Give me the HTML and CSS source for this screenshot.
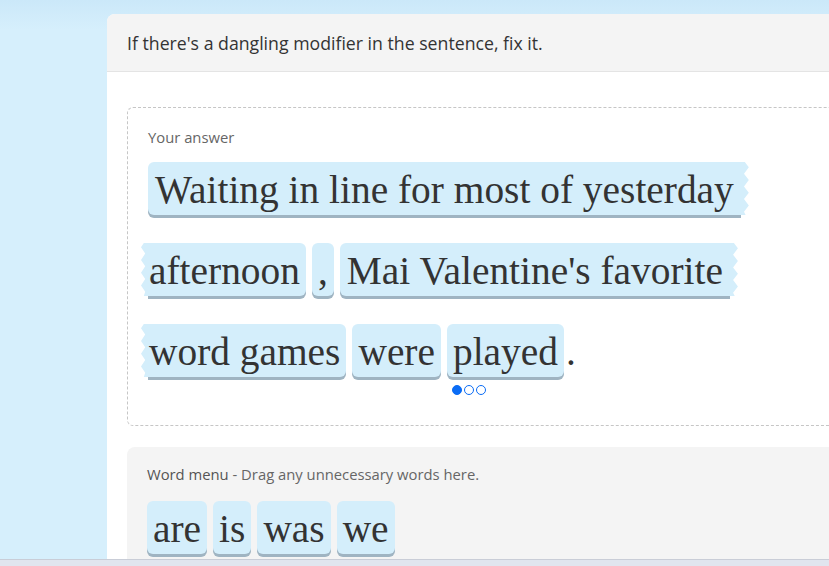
FILE: index.html
```html
<!DOCTYPE html>
<html lang="en">
<head>
<meta charset="utf-8">
<title>Dangling modifier</title>
<link rel="stylesheet" href="styles.css">
</head>
<body>
<div class="page">
  <div class="card">
    <div class="card-header">If there's a dangling modifier in the sentence, fix it.</div>
    <div class="card-body">
      <div class="answer">
        <div class="label">Your answer</div>
        <div class="lines">
          <div class="line">
            <span class="chip torn-right">Waiting in line for most of yesterday</span>
          </div>
          <div class="line">
            <span class="chip torn-left">afternoon</span>
            <span class="chip">,</span>
            <span class="chip torn-right">Mai Valentine's favorite</span>
          </div>
          <div class="line">
            <span class="chip torn-left">word games</span>
            <span class="chip">were</span>
            <span class="chip with-dots">played<span class="dots"><i class="dot on"></i><i class="dot"></i><i class="dot"></i></span></span>
            <span class="plain">.</span>
          </div>
        </div>
      </div>
      <div class="menu">
        <div class="label"><span class="label-strong">Word menu</span> - Drag any unnecessary words here.</div>
        <div class="line menu-line">
          <span class="chip">are</span>
          <span class="chip">is</span>
          <span class="chip">was</span>
          <span class="chip">we</span>
        </div>
      </div>
    </div>
  </div>
</div>
<div class="bottom-bar"></div>
</body>
</html>
```

FILE: styles.css
```css
* { box-sizing: border-box; }

html, body {
  margin: 0;
  height: 566px;
  overflow: hidden;
}

body {
  background: linear-gradient(#cbe8f9 0, #d6effc 30px, #d6effc 100%);
  font-family: "Open Sans", Lato, sans-serif;
  color: #333;
}

.page {
  padding: 14px 0 0 107px;
}

.card {
  width: 760px;
  background: #fff;
  border-radius: 8px 0 0 0;
  height: 560px;
}

.card-header {
  height: 58px;
  background: #f4f4f4;
  border-bottom: 1px solid #e4e4e4;
  border-radius: 8px 0 0 0;
  display: flex;
  align-items: center;
  padding-left: 20px;
  font-size: 17.7px;
  color: #333;
}

.card-body {
  padding: 35px 0 0 20px;
}

.answer {
  height: 319px;
  border: 1px dashed #c6c6c6;
  border-right: none;
  border-radius: 6px 0 0 6px;
  padding: 20px 0 0 20px;
}

.label {
  font-size: 14.8px;
  line-height: 18px;
  color: #666;
}

.label-strong {
  color: #555;
}

.lines {
  margin-top: 16px;
  display: flex;
  flex-direction: column;
  gap: 28px;
}

.line {
  display: flex;
  align-items: flex-start;
  gap: 6px;
}

.chip {
  position: relative;
  display: inline-block;
  height: 53px;
  line-height: 57px;
  padding: 0 6px;
  background: #d4eefb;
  border-radius: 6px;
  box-shadow: 0 3px 0 #9fb4c2;
  font-family: "Liberation Serif", "Times New Roman", serif;
  font-size: 39.4px;
  color: #333;
  white-space: nowrap;
}

.chip.torn-right {
  padding-left: 7px;
  padding-right: 7px;
  border-top-right-radius: 0;
  border-bottom-right-radius: 0;
}

.chip.torn-right::after {
  content: "";
  position: absolute;
  top: 0;
  right: -8px;
  width: 8px;
  height: 53px;
  background: #d4eefb;
  clip-path: polygon(0 0, 50% 0, 100% 10%, 40% 22%, 100% 34%, 40% 46%, 100% 58%, 40% 70%, 100% 82%, 40% 94%, 60% 100%, 0 100%);
}

.chip.torn-left {
  padding-left: 1px;
  border-top-left-radius: 0;
  border-bottom-left-radius: 0;
}

.chip.torn-left::before {
  content: "";
  position: absolute;
  top: 0;
  left: -7px;
  width: 7px;
  height: 53px;
  background: #d4eefb;
  clip-path: polygon(100% 0, 40% 0, 0 8%, 60% 20%, 0 32%, 60% 44%, 0 56%, 60% 68%, 0 80%, 60% 92%, 40% 100%, 100% 100%);
}

.plain {
  font-family: "Liberation Serif", "Times New Roman", serif;
  font-size: 39.4px;
  line-height: 57px;
  color: #333;
  margin-left: -4px;
}

.dots {
  position: absolute;
  left: 5px;
  top: 61px;
  display: flex;
  gap: 2px;
  line-height: 0;
}

.dot {
  display: block;
  width: 10px;
  height: 10px;
  border-radius: 50%;
  border: 1.5px solid #0a6cf5;
}

.dot.on {
  background: #0a6cf5;
}

.menu {
  margin-top: 21px;
  height: 200px;
  background: #f4f4f4;
  border-radius: 8px 0 0 8px;
  padding: 18px 0 0 20px;
}

.menu-line {
  margin-top: 18px;
}

.bottom-bar {
  position: fixed;
  left: 0;
  right: 0;
  bottom: 0;
  height: 7px;
  background: #e1e5ef;
  border-top: 1px solid #c9cdd7;
}
```
